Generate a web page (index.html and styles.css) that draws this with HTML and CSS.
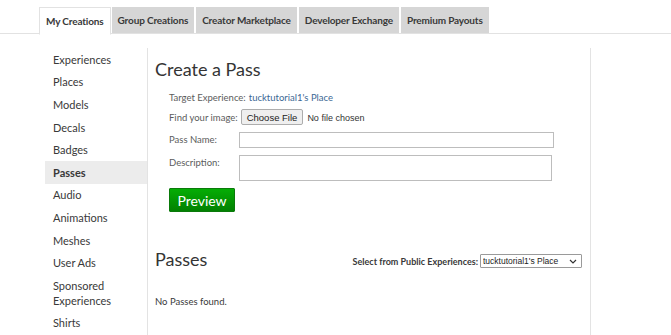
FILE: index.html
```html
<!DOCTYPE html>
<html lang="en">
<head>
    <meta charset="UTF-8">
    <title>Create a Pass</title>
    <link rel="stylesheet" href="styles.css">
</head>
<body>
    <div class="tabs">
        <div class="tab active">My Creations</div>
        <div class="tab">Group Creations</div>
        <div class="tab">Creator Marketplace</div>
        <div class="tab">Developer Exchange</div>
        <div class="tab">Premium Payouts</div>
    </div>

    <div class="main">
        <ul class="nav">
            <li>Experiences</li>
            <li>Places</li>
            <li>Models</li>
            <li>Decals</li>
            <li>Badges</li>
            <li class="selected">Passes</li>
            <li>Audio</li>
            <li>Animations</li>
            <li>Meshes</li>
            <li>User Ads</li>
            <li>Sponsored<br>Experiences</li>
            <li>Shirts</li>
        </ul>

        <div class="content">
            <h1>Create a Pass</h1>
            <div class="form">
                <div class="row target">
                    <span>Target Experience:</span>
                    <a href="#">tucktutorial1's Place</a>
                </div>
                <div class="row">
                    <label>Find your image:</label>
                    <input type="file" class="file">
                </div>
                <div class="row">
                    <label class="col">Pass Name:</label>
                    <input type="text" class="text">
                </div>
                <div class="row top">
                    <label class="col">Description:</label>
                    <textarea class="desc"></textarea>
                </div>
                <button class="preview">Preview</button>
            </div>

            <div class="passes-head">
                <h1>Passes</h1>
                <div class="picker">
                    <span>Select from Public Experiences:</span>
                    <span class="select-wrap">
                        <select>
                            <option>tucktutorial1's Place</option>
                        </select>
                        <svg class="chevron" width="8" height="5" viewBox="0 0 8 5"><path d="M1 1l3 3 3-3" fill="none" stroke="#333" stroke-width="1.2"/></svg>
                    </span>
                </div>
            </div>
            <p class="empty">No Passes found.</p>
        </div>
    </div>
</body>
</html>
```

FILE: styles.css
```css
body {
    margin: 0;
    font-family: Lato, "Open Sans", sans-serif;
    color: #343434;
    background: white;
}
.tabs {
    display: flex;
    padding: 7px 0 0 39px;
    border-bottom: 1px solid #e2e2e2;
    height: 26px;
}
.tab {
    background-color: #d6d6d6;
    border-right: 2px solid white;
    padding: 0 6px;
    font-size: 10px;
    font-weight: 700;
    letter-spacing: -0.15px;
    line-height: 26px;
    color: #393939;
}
.tab.active {
    background: white;
    border: 1px solid #e2e2e2;
    border-bottom: 1px solid white;
    height: 26px;
    margin-right: 1px;
}
.main {
    display: flex;
    margin: 14px 0 0 45px;
}
.nav {
    list-style: none;
    margin: 0;
    padding: 0;
    width: 102px;
}
.nav li {
    padding: 3.8px 8px;
    font-size: 11px;
    line-height: 15px;
    color: #393939;
}
.nav li.selected {
    background-color: #ececec;
    font-weight: 700;
}
.content {
    width: 427px;
    min-height: 300px;
    border-left: 1px solid #e3e3e3;
    border-right: 1px solid #e3e3e3;
    padding: 0 8px 0 7px;
}
h1 {
    font-size: 18px;
    font-weight: 400;
    line-height: 24px;
    margin: 9px 0 0 0;
    color: #343434;
}
.form {
    padding: 8px 0 0 14px;
    font-size: 9.5px;
    color: #5c5c5c;
}
.row {
    display: flex;
    align-items: center;
    margin-bottom: 6px;
}
.row.top {
    align-items: flex-start;
    margin-bottom: 7px;
}
.target {
    height: 16px;
    margin-bottom: 4px;
}
.target a {
    color: #3b6894;
    text-decoration: none;
    margin-left: 3px;
}
.file {
    font-family: "Liberation Sans", sans-serif;
    font-size: 9px;
    margin-left: 3px;
    color: #333;
}
.file::file-selector-button {
    font-family: "Liberation Sans", sans-serif;
    font-size: 9.5px;
    height: 16px;
    padding: 0 5px;
    margin-right: 4px;
    border: 1px solid #adadad;
    border-radius: 2px;
    background: #efefef;
    color: #222;
}
.col {
    width: 70px;
}
.text {
    width: 309px;
    height: 12px;
    border: 1px solid #bdbdbd;
    padding: 1px 2px;
    margin: 1px 0 0 0;
}
.desc {
    width: 307px;
    height: 22px;
    border: 1px solid #bdbdbd;
    padding: 1px 2px;
    margin: 1px 0 0 0;
    resize: none;
}
.row.top label {
    padding-top: 3px;
}
.preview {
    width: 66px;
    height: 24px;
    font-family: Lato, sans-serif;
    font-size: 14px;
    color: white;
    border: 1px solid #0a7a0a;
    border-radius: 1px;
    background: linear-gradient(#05ad05, #028102);
    cursor: pointer;
}
.passes-head {
    display: flex;
    justify-content: space-between;
    align-items: center;
    margin-top: 35px;
}
.passes-head h1 {
    margin: 0;
}
.picker {
    display: flex;
    align-items: center;
    padding-top: 4px;
    font-size: 9px;
    font-weight: 700;
    color: #393939;
}
.select-wrap {
    position: relative;
    display: inline-block;
    margin-left: 2px;
}
.select-wrap select {
    appearance: none;
    width: 102px;
    height: 14px;
    font-family: "Liberation Sans", sans-serif;
    font-size: 8.5px;
    padding: 0 0 0 2px;
    border: 1px solid #9a9a9a;
    border-radius: 1px;
    background: white;
    color: #222;
    display: block;
}
.chevron {
    position: absolute;
    right: 5px;
    top: 5px;
}
.empty {
    font-size: 9.5px;
    margin: 25px 0 0 0;
    color: #393939;
}
```
